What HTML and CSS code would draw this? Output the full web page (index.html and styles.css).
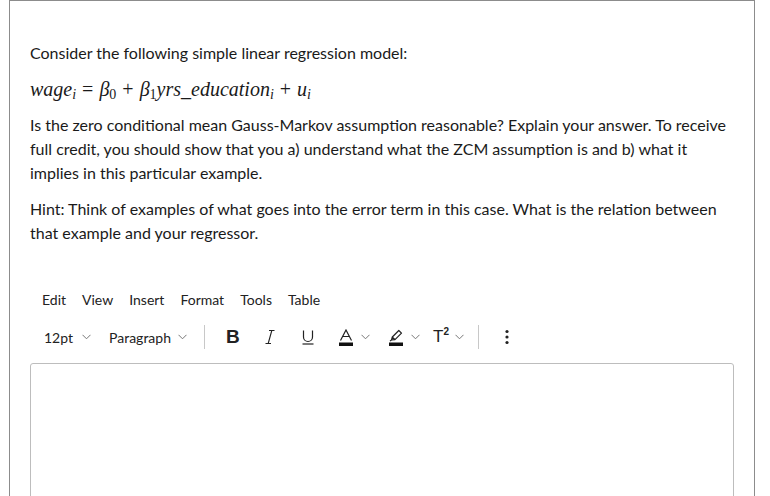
FILE: index.html
```html
<!DOCTYPE html>
<html>
<head>
<meta charset="utf-8">
<link rel="stylesheet" href="styles.css">
</head>
<body>
<div class="card">
  <div class="question">
    <p>Consider the following simple linear regression model:</p>
    <p class="math"><i>wage</i><sub><i>i</i></sub><span class="op">=</span><i>β</i><sub>0</sub><span class="op">+</span><i>β</i><sub>1</sub><i>yrs_education</i><sub><i>i</i></sub><span class="op">+</span><i>u</i><sub><i>i</i></sub></p>
    <p>Is the zero conditional mean Gauss-Markov assumption reasonable? Explain your answer. To receive full credit, you should show that you a) understand what the ZCM assumption is and b) what it implies in this particular example.</p>
    <p>Hint: Think of examples of what goes into the error term in this case. What is the relation between that example and your regressor.</p>
  </div>
  <div class="editor">
    <div class="menubar">
      <span>Edit</span><span>View</span><span>Insert</span><span>Format</span><span>Tools</span><span>Table</span>
    </div>
    <div class="toolbar">
      <div class="group">
        <span class="drop size">12pt <svg class="chev" width="9" height="6" viewBox="0 0 9 6"><polyline points="0.5,0.8 4.5,4.8 8.5,0.8"/></svg></span>
        <span class="drop para">Paragraph <svg class="chev" width="9" height="6" viewBox="0 0 9 6"><polyline points="0.5,0.8 4.5,4.8 8.5,0.8"/></svg></span>
      </div>
      <div class="sep first"></div>
      <div class="group icons">
        <span class="btn b-bold"><span class="bold">B</span></span>
        <span class="btn b-ital"><svg width="10" height="16" viewBox="0 0 10 16"><path d="M4 1.5 H9.5 M6.8 1.5 L3.2 14.5 M0.5 14.5 H6" fill="none" stroke="#222" stroke-width="1.1"/></svg></span>
        <span class="btn b-under"><svg width="12" height="16" viewBox="0 0 12 16"><path d="M1.5 1.5 V8 A4.5 4.5 0 0 0 10.5 8 V1.5" fill="none" stroke="#222" stroke-width="1.2"/><line x1="0.5" y1="15" x2="11.5" y2="15" stroke="#222" stroke-width="1.2"/></svg></span>
        <span class="btn b-color"><svg width="14" height="17" viewBox="0 0 14 17"><path d="M1.5 11.5 L7 1 L12.5 11.5 M3.6 7.5 H10.4" fill="none" stroke="#222" stroke-width="1.2"/><rect x="0" y="13.5" width="14" height="3.5" fill="#111"/></svg><svg class="chev" width="9" height="6" viewBox="0 0 9 6"><polyline points="0.5,0.8 4.5,4.8 8.5,0.8"/></svg></span>
        <span class="btn b-high"><svg width="14" height="17" viewBox="0 0 14 17"><path d="M2.5 11 L3.3 8 L9.8 1.5 L12.5 4.2 L6 10.7 Z M3.3 8 L6 10.7 M1 12 L2.5 11" fill="none" stroke="#222" stroke-width="1.2" stroke-linejoin="round"/><rect x="0" y="13.5" width="14" height="3.5" fill="#111"/></svg><svg class="chev" width="9" height="6" viewBox="0 0 9 6"><polyline points="0.5,0.8 4.5,4.8 8.5,0.8"/></svg></span>
        <span class="btn b-sup"><span class="tsup">T<sup>2</sup></span><svg class="chev" width="9" height="6" viewBox="0 0 9 6"><polyline points="0.5,0.8 4.5,4.8 8.5,0.8"/></svg></span>
      </div>
      <div class="sep second"></div>
      <div class="group">
        <span class="btn more"><svg width="4" height="16" viewBox="0 0 4 16"><circle cx="2" cy="2.5" r="1.6"/><circle cx="2" cy="8" r="1.6"/><circle cx="2" cy="13.5" r="1.6"/></svg></span>
      </div>
    </div>
    <div class="textarea"></div>
  </div>
</div>
</body>
</html>
```

FILE: styles.css
```css
html, body {
  margin: 0;
  padding: 0;
  background: #fff;
}
body {
  font-family: Lato, "Liberation Sans", sans-serif;
  color: #1a1a1a;
  overflow: hidden;
}
.card {
  margin-left: 9px;
  height: 520px;
  border: 1px solid #8c8c8c;
  border-bottom: none;
  padding: 0 20px;
  width: 704px;
}
.question {
  padding-top: 40px;
}
.question p {
  margin: 0 0 12px 0;
  font-size: 16px;
  line-height: 24px;
}
.question p.math {
  font-family: "Liberation Serif", "DejaVu Serif", serif;
  font-size: 20px;
  line-height: 24px;
}
.math sub {
  font-size: 14px;
  vertical-align: -3px;
  line-height: 0;
}
.math .op {
  font-style: normal;
  padding: 0 6px;
}
.editor {
  margin-top: 45px;
}
.menubar {
  display: flex;
  gap: 16px;
  padding-left: 12px;
  font-size: 14px;
  line-height: 20px;
  color: #222;
}
.toolbar {
  display: flex;
  align-items: center;
  margin-top: 15px;
  height: 24px;
  font-size: 14px;
  color: #222;
}
.group {
  display: flex;
  align-items: center;
}
.drop {
  display: inline-flex;
  align-items: center;
}
.drop.size {
  padding-left: 14px;
}
.drop.size .chev {
  margin-left: 9px;
}
.drop.para {
  padding-left: 18px;
}
.drop.para .chev {
  margin-left: 7px;
}
.chev {
  fill: none;
  stroke: #777;
  stroke-width: 1;
}
.btn .chev {
  margin-left: 8px;
}
.sep {
  width: 1px;
  height: 24px;
  background: #c8c8c8;
}
.sep.first {
  margin: 0 21px 0 17px;
}
.btn {
  display: inline-flex;
  align-items: center;
}
.b-bold {
  width: 39px;
}
.bold {
  font-family: "Liberation Sans", Arial, sans-serif;
  font-weight: bold;
  font-size: 19px;
  line-height: 20px;
}
.b-ital {
  width: 37px;
}
.b-under {
  width: 37px;
}
.b-color {
  width: 50px;
}
.b-high {
  width: 44px;
}
.b-sup {
  width: 45px;
}
.tsup {
  font-family: "Liberation Sans", Arial, sans-serif;
  font-size: 17px;
  line-height: 20px;
}
.tsup sup {
  font-size: 10px;
  font-weight: bold;
  vertical-align: 7px;
  line-height: 0;
}
.b-sup .chev {
  margin-left: 6px;
}
.more {
  margin-left: 26px;
}
.more svg {
  fill: #222;
}
.textarea {
  margin-top: 14px;
  height: 200px;
  border: 1px solid #bdbdbd;
  border-radius: 3px;
}
```
